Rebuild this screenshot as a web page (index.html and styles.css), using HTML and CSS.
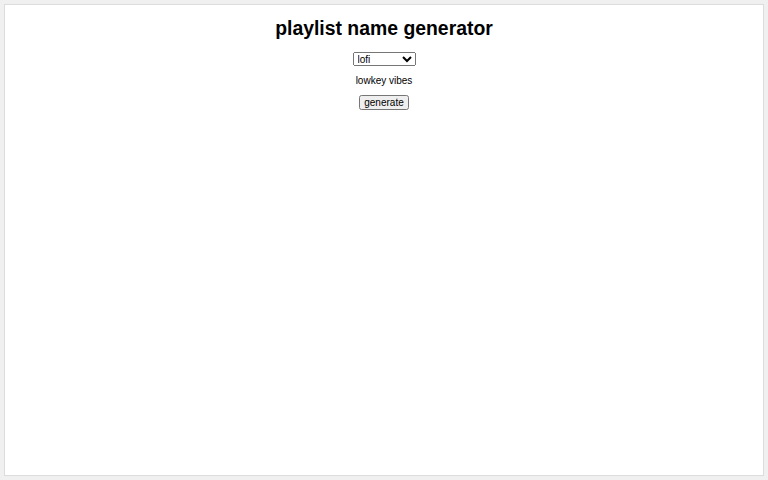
FILE: index.html
```html
<!DOCTYPE html>
<html>
  <head>
    <title>playlist name generator</title>
    <meta name="viewport" content="width=device-width, initial-scale=1.0">
    <link rel="stylesheet" href="styles.css">
  </head>
  <body>
    <div class="page">
      <h1>playlist name generator</h1>
      <select id="mood">
        <option>lofi</option>
        <option>chill</option>
        <option>hype</option>
        <option>sad</option>
      </select>
      <p id="name">lowkey vibes</p>
      <button id="generate">generate</button>
    </div>
  </body>
</html>
```

FILE: styles.css
```css
body {
  background-color: #f0f0f0;
  font-family: 'Liberation Sans', Arial, sans-serif;
  margin: 0;
  padding: 4px;
}
.page {
  background-color: white;
  border: 1px solid #dcdcdc;
  height: 472px;
  box-sizing: border-box;
  text-align: center;
  padding-top: 1px;
}
h1 {
  font-size: 19.4px;
  margin: 11px 0 12px;
}
select {
  font-family: 'Liberation Sans', Arial, sans-serif;
  font-size: 10px;
  width: 63px;
  height: 14px;
  padding: 0;
  display: block;
  margin: 0 auto;
}
p {
  font-size: 10px;
  margin: 9px 0 6px;
}
button {
  font-family: 'Liberation Sans', Arial, sans-serif;
  font-size: 10px;
  height: 15px;
  padding: 0 3px;
}
```
